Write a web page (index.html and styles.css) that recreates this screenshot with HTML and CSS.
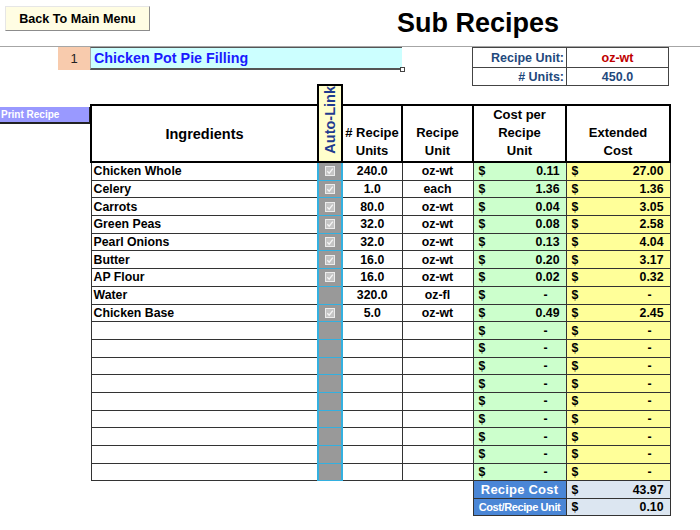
FILE: index.html
```html
<!DOCTYPE html>
<html lang="en">

<head>
    <meta charset="UTF-8">
    <title>Sub Recipes</title>
    <link rel="stylesheet" href="styles.css">
</head>

<body>
    <div class="top">
        <button class="menu-btn">Back To Main Menu</button>
        <h1>Sub Recipes</h1>
    </div>

    <div class="info">
        <div class="num">1</div>
        <div class="name">Chicken Pot Pie Filling<span class="handle"></span></div>
        <table class="unit-box">
            <tr class="r1">
                <td class="lbl">Recipe Unit:</td>
                <td class="val red">oz-wt</td>
            </tr>
            <tr class="r2">
                <td class="lbl"># Units:</td>
                <td class="val">450.0</td>
            </tr>
        </table>
    </div>

    <div class="main">
        <div class="side">
            <button class="print-btn">Print Recipe</button>
        </div>

        <table class="recipe">
            <colgroup>
                <col style="width:227px">
                <col style="width:24px">
                <col style="width:60px">
                <col style="width:71px">
                <col style="width:93px">
                <col style="width:104px">
            </colgroup>
            <tr class="pre">
                <td class="blank"></td>
                <th class="auto-head" rowspan="2"><span class="vert">Auto-Link</span></th>
                <td class="blank"></td>
                <td class="blank"></td>
                <td class="blank"></td>
                <td class="blank"></td>
            </tr>
            <tr class="head">
                <th class="ing-head">Ingredients</th>
                <th># Recipe<br>Units</th>
                <th>Recipe<br>Unit</th>
                <th>Cost per<br>Recipe<br>Unit</th>
                <th>Extended<br>Cost</th>
            </tr>
            <tr>
                <td class="ing">Chicken Whole</td>
                <td class="auto"><svg width="10" height="10" viewBox="0 0 10 10"><rect x="0.5" y="0.5" width="9" height="9" fill="#c4c4c4" stroke="#ececec"/><path d="M2.3 5.2 L4.2 7.2 L7.8 2.6" fill="none" stroke="#f4f4f4" stroke-width="1.3"/></svg></td>
                <td>240.0</td>
                <td>oz-wt</td>
                <td class="cost"><span class="d">$</span>0.11</td>
                <td class="ext"><span class="d">$</span>27.00</td>
            </tr>
            <tr>
                <td class="ing">Celery</td>
                <td class="auto"><svg width="10" height="10" viewBox="0 0 10 10"><rect x="0.5" y="0.5" width="9" height="9" fill="#c4c4c4" stroke="#ececec"/><path d="M2.3 5.2 L4.2 7.2 L7.8 2.6" fill="none" stroke="#f4f4f4" stroke-width="1.3"/></svg></td>
                <td>1.0</td>
                <td>each</td>
                <td class="cost"><span class="d">$</span>1.36</td>
                <td class="ext"><span class="d">$</span>1.36</td>
            </tr>
            <tr>
                <td class="ing">Carrots</td>
                <td class="auto"><svg width="10" height="10" viewBox="0 0 10 10"><rect x="0.5" y="0.5" width="9" height="9" fill="#c4c4c4" stroke="#ececec"/><path d="M2.3 5.2 L4.2 7.2 L7.8 2.6" fill="none" stroke="#f4f4f4" stroke-width="1.3"/></svg></td>
                <td>80.0</td>
                <td>oz-wt</td>
                <td class="cost"><span class="d">$</span>0.04</td>
                <td class="ext"><span class="d">$</span>3.05</td>
            </tr>
            <tr>
                <td class="ing">Green Peas</td>
                <td class="auto"><svg width="10" height="10" viewBox="0 0 10 10"><rect x="0.5" y="0.5" width="9" height="9" fill="#c4c4c4" stroke="#ececec"/><path d="M2.3 5.2 L4.2 7.2 L7.8 2.6" fill="none" stroke="#f4f4f4" stroke-width="1.3"/></svg></td>
                <td>32.0</td>
                <td>oz-wt</td>
                <td class="cost"><span class="d">$</span>0.08</td>
                <td class="ext"><span class="d">$</span>2.58</td>
            </tr>
            <tr>
                <td class="ing">Pearl Onions</td>
                <td class="auto"><svg width="10" height="10" viewBox="0 0 10 10"><rect x="0.5" y="0.5" width="9" height="9" fill="#c4c4c4" stroke="#ececec"/><path d="M2.3 5.2 L4.2 7.2 L7.8 2.6" fill="none" stroke="#f4f4f4" stroke-width="1.3"/></svg></td>
                <td>32.0</td>
                <td>oz-wt</td>
                <td class="cost"><span class="d">$</span>0.13</td>
                <td class="ext"><span class="d">$</span>4.04</td>
            </tr>
            <tr>
                <td class="ing">Butter</td>
                <td class="auto"><svg width="10" height="10" viewBox="0 0 10 10"><rect x="0.5" y="0.5" width="9" height="9" fill="#c4c4c4" stroke="#ececec"/><path d="M2.3 5.2 L4.2 7.2 L7.8 2.6" fill="none" stroke="#f4f4f4" stroke-width="1.3"/></svg></td>
                <td>16.0</td>
                <td>oz-wt</td>
                <td class="cost"><span class="d">$</span>0.20</td>
                <td class="ext"><span class="d">$</span>3.17</td>
            </tr>
            <tr>
                <td class="ing">AP Flour</td>
                <td class="auto"><svg width="10" height="10" viewBox="0 0 10 10"><rect x="0.5" y="0.5" width="9" height="9" fill="#c4c4c4" stroke="#ececec"/><path d="M2.3 5.2 L4.2 7.2 L7.8 2.6" fill="none" stroke="#f4f4f4" stroke-width="1.3"/></svg></td>
                <td>16.0</td>
                <td>oz-wt</td>
                <td class="cost"><span class="d">$</span>0.02</td>
                <td class="ext"><span class="d">$</span>0.32</td>
            </tr>
            <tr>
                <td class="ing">Water</td>
                <td class="auto"></td>
                <td>320.0</td>
                <td>oz-fl</td>
                <td class="cost nil"><span class="d">$</span>-</td>
                <td class="ext nil"><span class="d">$</span>-</td>
            </tr>
            <tr>
                <td class="ing">Chicken Base</td>
                <td class="auto"><svg width="10" height="10" viewBox="0 0 10 10"><rect x="0.5" y="0.5" width="9" height="9" fill="#c4c4c4" stroke="#ececec"/><path d="M2.3 5.2 L4.2 7.2 L7.8 2.6" fill="none" stroke="#f4f4f4" stroke-width="1.3"/></svg></td>
                <td>5.0</td>
                <td>oz-wt</td>
                <td class="cost"><span class="d">$</span>0.49</td>
                <td class="ext"><span class="d">$</span>2.45</td>
            </tr>
            <tr><td></td><td class="auto"></td><td></td><td></td><td class="cost nil"><span class="d">$</span>-</td><td class="ext nil"><span class="d">$</span>-</td></tr>
            <tr><td></td><td class="auto"></td><td></td><td></td><td class="cost nil"><span class="d">$</span>-</td><td class="ext nil"><span class="d">$</span>-</td></tr>
            <tr><td></td><td class="auto"></td><td></td><td></td><td class="cost nil"><span class="d">$</span>-</td><td class="ext nil"><span class="d">$</span>-</td></tr>
            <tr><td></td><td class="auto"></td><td></td><td></td><td class="cost nil"><span class="d">$</span>-</td><td class="ext nil"><span class="d">$</span>-</td></tr>
            <tr><td></td><td class="auto"></td><td></td><td></td><td class="cost nil"><span class="d">$</span>-</td><td class="ext nil"><span class="d">$</span>-</td></tr>
            <tr><td></td><td class="auto"></td><td></td><td></td><td class="cost nil"><span class="d">$</span>-</td><td class="ext nil"><span class="d">$</span>-</td></tr>
            <tr><td></td><td class="auto"></td><td></td><td></td><td class="cost nil"><span class="d">$</span>-</td><td class="ext nil"><span class="d">$</span>-</td></tr>
            <tr><td></td><td class="auto"></td><td></td><td></td><td class="cost nil"><span class="d">$</span>-</td><td class="ext nil"><span class="d">$</span>-</td></tr>
            <tr><td></td><td class="auto"></td><td></td><td></td><td class="cost nil"><span class="d">$</span>-</td><td class="ext nil"><span class="d">$</span>-</td></tr>
            <tr class="total">
                <td class="blank"></td>
                <td class="blank"></td>
                <td class="blank"></td>
                <td class="blank"></td>
                <td class="tot-lbl">Recipe Cost</td>
                <td class="tot-val"><span class="d">$</span>43.97</td>
            </tr>
            <tr class="total t2">
                <td class="blank"></td>
                <td class="blank"></td>
                <td class="blank"></td>
                <td class="blank"></td>
                <td class="tot-lbl small">Cost/Recipe Unit</td>
                <td class="tot-val"><span class="d">$</span>0.10</td>
            </tr>
        </table>
    </div>
</body>

</html>
```

FILE: styles.css
```css
body {
    font-family: "Liberation Sans", Arial, sans-serif;
    background-color: white;
    margin: 0;
    padding: 0;
    color: black;
}

.top {
    display: flex;
    align-items: flex-start;
    height: 46px;
    border-bottom: 1px solid #a6a6a6;
}

.menu-btn {
    margin: 6px 0 0 5px;
    width: 145px;
    height: 25px;
    background-color: #fffde3;
    border: 1px solid #e6e6e6;
    border-right-color: #8c8c8c;
    border-bottom-color: #8c8c8c;
    font-family: inherit;
    font-weight: bold;
    font-size: 12.6px;
    padding: 0;
}

h1 {
    margin: 7px 0 0 247px;
    font-size: 27px;
    line-height: 32px;
}

.info {
    display: flex;
    align-items: flex-start;
    height: 37px;
}

.num {
    margin-left: 58px;
    width: 32px;
    height: 23px;
    line-height: 23px;
    background-color: #f8cbad;
    text-align: center;
    font-size: 13px;
    color: #222;
}

.name {
    position: relative;
    box-sizing: border-box;
    width: 312px;
    height: 23px;
    line-height: 20px;
    padding-left: 3px;
    background-color: #ccffff;
    border-top: 1px solid #555;
    border-bottom: 2px solid #555;
    border-left: 1px solid #aaa;
    color: #1a1aff;
    font-weight: bold;
    font-size: 14.3px;
}

.handle {
    position: absolute;
    right: -3px;
    bottom: -4px;
    width: 3px;
    height: 3px;
    border: 1px solid #444;
    background: white;
}

.unit-box {
    margin-left: 70px;
    width: 197px;
    border-collapse: collapse;
    border: 1px solid #444;
    font-weight: bold;
    font-size: 12.5px;
    color: #1f497d;
}

.unit-box td {
    border: 1px solid #444;
    padding: 0 2px;
}

.unit-box .r1 td {
    height: 19px;
}

.unit-box .r2 td {
    height: 17px;
}

.unit-box .lbl {
    width: 89px;
    text-align: right;
}

.unit-box .val {
    text-align: center;
}

.unit-box .red {
    color: #c00000;
}

.main {
    display: flex;
    align-items: flex-start;
}

.side {
    width: 90px;
    flex-shrink: 0;
}

.print-btn {
    display: block;
    margin-top: 23px;
    width: 90px;
    height: 17px;
    padding: 0 0 0 1px;
    text-align: left;
    background-color: #9999ff;
    border: none;
    border-right: 1px solid #222;
    border-bottom: 2px solid #222;
    color: white;
    font-family: inherit;
    font-weight: bold;
    font-size: 10px;
}

.recipe {
    width: 579px;
    table-layout: fixed;
    border-collapse: collapse;
    font-size: 12.3px;
    font-weight: bold;
}

.recipe td {
    height: 16.7px;
    padding: 0 3px;
    line-height: 14px;
    border: 1px solid #333;
    text-align: center;
    white-space: nowrap;
    overflow: hidden;
}

.recipe .pre td {
    height: 19px;
}

.recipe td.blank {
    border: none;
}

.recipe th {
    border: 2px solid black;
    font-size: 13px;
    line-height: 18px;
    vertical-align: bottom;
    padding: 0 0 1px 0;
}

.recipe .head th {
    height: 51px;
}

.recipe th.ing-head {
    font-size: 14.5px;
    vertical-align: middle;
    padding-top: 2px;
}

.recipe th.auto-head {
    background-color: #ffffcc;
    padding: 0 0 2px 0;
}

.vert {
    display: inline-block;
    writing-mode: vertical-rl;
    transform: rotate(180deg);
    font-size: 14.5px;
    line-height: 22px;
    color: #1f3b8f;
}

.recipe td.ing {
    text-align: left;
    padding-left: 2px;
}

.recipe td.auto {
    background-color: #999999;
    border: 1px solid #33b0e0;
    border-left-width: 2px;
    border-right-width: 2px;
    padding: 0;
}

.recipe td.auto svg {
    display: block;
    margin: 0 auto;
}

.recipe td.cost,
.recipe td.ext,
.recipe td.tot-val {
    text-align: right;
    padding: 0 6px 0 5px;
}

.recipe td.cost {
    background-color: #ccffcc;
}

.recipe td.ext {
    background-color: #ffff99;
}

.recipe td.nil {
    padding-right: 18px;
}

.recipe .d {
    float: left;
}

.recipe .total td {
    height: 17px;
}

.recipe .t2 td {
    height: 16px;
}

.recipe td.tot-lbl {
    background-color: #4a86d6;
    color: white;
    font-size: 13px;
    letter-spacing: 0.2px;
}

.recipe td.tot-lbl.small {
    font-size: 11px;
    letter-spacing: -0.4px;
}

.recipe td.tot-val {
    background-color: #dce6f1;
}
```
